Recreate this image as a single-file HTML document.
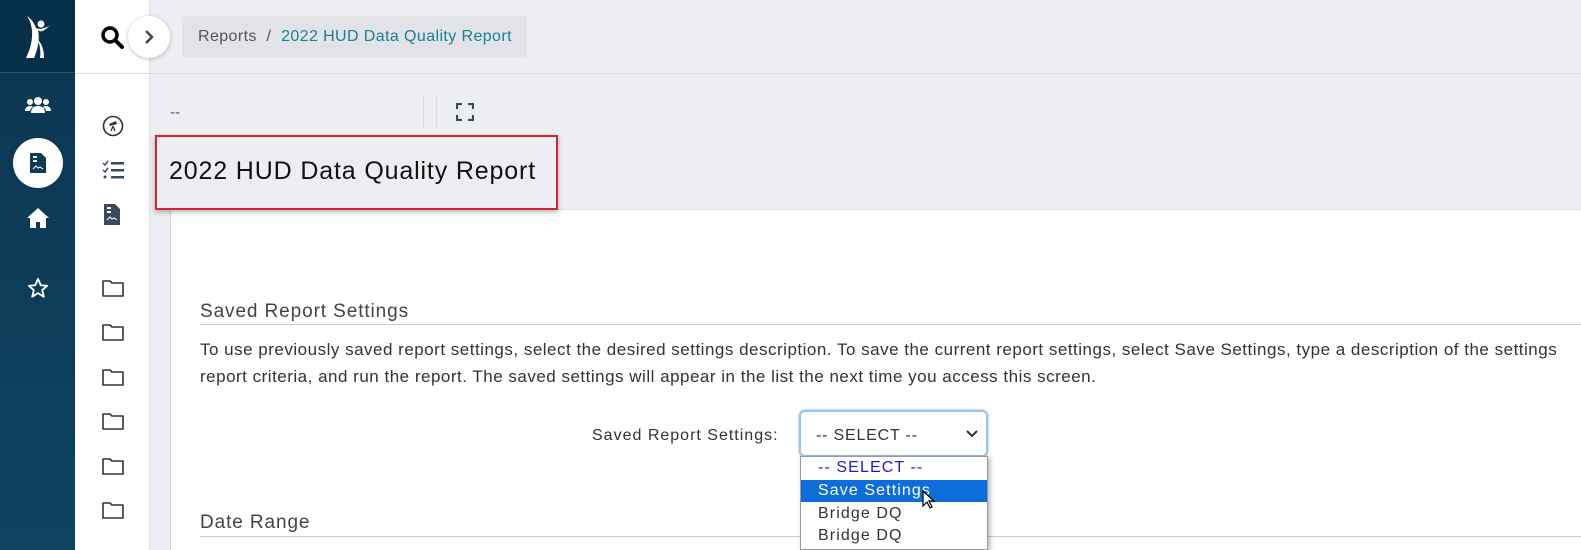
<!DOCTYPE html>
<html><head><style>
*{margin:0;padding:0;box-sizing:border-box}
body{width:1581px;height:550px;overflow:hidden;font-family:"Liberation Sans",sans-serif;background:#eceef1;position:relative}
.a{position:absolute}
</style></head><body>
<div class="a" style="left:0;top:0;width:75px;height:550px;background:linear-gradient(#0b3550,#0d4461)"></div>
<div class="a" style="left:0;top:0;width:75px;height:73px;background:#06304a;border-bottom:1px solid #2a5470"></div>
<svg class="a" style="left:24px;top:14px" width="30" height="46" viewBox="0 0 30 46"><path d="M3 2 C10 12 10 28 2 44 L10 44 C14 34 16 26 14 16 C18 20 22 14 26 12 C20 14 16 16 12 14 C10 8 6 4 3 2Z" fill="#fff"/><circle cx="17" cy="10" r="3.5" fill="#fff"/><path d="M14 26 C16 32 17 38 16 44 L20 44 C20 36 18 30 14 26Z" fill="#fff"/></svg>
<svg class="a" style="left:25px;top:96px" width="26" height="18" viewBox="0 0 26 18" fill="#fff"><circle cx="13" cy="5" r="4"/><circle cx="5" cy="6" r="3"/><circle cx="21" cy="6" r="3"/><path d="M6 17c0-5 3-7 7-7s7 2 7 7z"/><path d="M0 15c0-3 2-5 5-5 1 0 2 0 3 1-2 1-3 3-3 4z"/><path d="M26 15c0-3-2-5-5-5-1 0-2 0-3 1 2 1 3 3 3 4z"/></svg>
<div class="a" style="left:13px;top:138px;width:50px;height:50px;border-radius:50%;background:#fff"></div>
<svg class="a" style="left:30px;top:153px" width="16" height="20" viewBox="0 0 16 20"><path d="M0 0h11l5 5v15H0z" fill="#0d3b55"/><rect x="3" y="3" width="4" height="2" fill="#fff"/><rect x="3" y="7" width="4" height="2" fill="#fff"/><path d="M3 16l3-3 2 2 2-1 3 2" stroke="#fff" fill="none"/></svg>
<svg class="a" style="left:27px;top:208px" width="22" height="20" viewBox="0 0 22 20" fill="#fff"><path d="M11 0L0 10h3v10h6v-6h4v6h6V10h3z"/></svg>
<svg class="a" style="left:27px;top:277px" width="22" height="22" viewBox="0 0 24 24"><path d="M12 2l3 7 7 .6-5.4 4.7 1.7 7.2L12 17.6 5.7 21.5l1.7-7.2L2 9.6 9 9z" fill="none" stroke="#fff" stroke-width="2" stroke-linejoin="round"/></svg>
<div class="a" style="left:75px;top:0;width:75px;height:550px;background:#fff;border-right:1px solid #dcdfe3"></div>
<div class="a" style="left:75px;top:73px;width:1506px;height:1px;background:#dcdfe3"></div>
<svg class="a" style="left:100px;top:25px" width="26" height="24" viewBox="0 0 26 24"><circle cx="10" cy="10" r="7" fill="none" stroke="#000" stroke-width="3.5"/><path d="M15 15l7 7" stroke="#000" stroke-width="4" stroke-linecap="round"/></svg>
<div class="a" style="left:128px;top:16px;width:42px;height:42px;border-radius:50%;background:#fff;box-shadow:0 1px 4px rgba(0,0,0,.25)"></div>
<svg class="a" style="left:143px;top:29px" width="12" height="16" viewBox="0 0 12 16"><path d="M3 2l6 6-6 6" fill="none" stroke="#444" stroke-width="2.5"/></svg>
<div class="a" style="left:182px;top:16px;width:345px;height:41px;background:#e1e3e7;border-radius:3px;font-size:16px;letter-spacing:0.4px;line-height:41px;padding-left:16px;color:#555;white-space:nowrap">Reports &nbsp;/&nbsp; <span style="color:#1a7f97">2022 HUD Data Quality Report</span></div>
<svg class="a" style="left:102px;top:115px" width="22" height="22" viewBox="0 0 22 22"><circle cx="11" cy="11" r="9.5" fill="none" stroke="#333" stroke-width="1.6"/><path d="M7 9l7-3 1 3-7 2z" fill="#333"/><path d="M11 11l-2 5M11 11l2 5" stroke="#333" stroke-width="1.3"/></svg>
<svg class="a" style="left:102px;top:160px" width="22" height="20" viewBox="0 0 22 20" fill="#3a4a5e"><path d="M1 3l2 2 3-4" stroke="#3a4a5e" fill="none" stroke-width="1.5"/><path d="M1 10l2 2 3-4" stroke="#3a4a5e" fill="none" stroke-width="1.5"/><circle cx="3" cy="17" r="1.5"/><rect x="9" y="2" width="13" height="2.5"/><rect x="9" y="9" width="13" height="2.5"/><rect x="9" y="16" width="13" height="2.5"/></svg>
<svg class="a" style="left:104px;top:204px" width="16" height="21" viewBox="0 0 16 21"><path d="M0 0h11l5 5v16H0z" fill="#3a4a5e"/><rect x="3" y="3" width="4" height="2" fill="#fff"/><rect x="3" y="7" width="4" height="2" fill="#fff"/><path d="M3 16l3-3 2 2 2-1 3 2" stroke="#fff" fill="none"/></svg>
<svg width="0" height="0" style="position:absolute"><defs><symbol id="f" viewBox="0 0 22 18"><path d="M1 2h7l2 2h11v13H1z" fill="none" stroke="#333" stroke-width="1.6" stroke-linejoin="round"/></symbol></defs></svg>
<svg class="a" style="left:102px;top:279px" width="22" height="18"><use href="#f"/></svg>
<svg class="a" style="left:102px;top:323px" width="22" height="18"><use href="#f"/></svg>
<svg class="a" style="left:102px;top:368px" width="22" height="18"><use href="#f"/></svg>
<svg class="a" style="left:102px;top:412px" width="22" height="18"><use href="#f"/></svg>
<svg class="a" style="left:102px;top:457px" width="22" height="18"><use href="#f"/></svg>
<svg class="a" style="left:102px;top:501px" width="22" height="18"><use href="#f"/></svg>
<div class="a" style="left:170px;top:104px;font-size:15px;color:#555">--</div>
<div class="a" style="left:423px;top:97px;width:1px;height:30px;background:#d8dadd"></div>
<div class="a" style="left:436px;top:97px;width:1px;height:30px;background:#d8dadd"></div>
<svg class="a" style="left:456px;top:103px" width="18" height="18" viewBox="0 0 18 18"><path d="M1 6V1h5M12 1h5v5M17 12v5h-5M6 17H1v-5" fill="none" stroke="#3a4a5e" stroke-width="2.2"/></svg>
<div class="a" style="left:170px;top:209px;width:1411px;height:341px;background:#fff;border-left:1px solid #d4d6d9;border-top:1px solid #e0e2e5"></div>
<div class="a" style="left:155px;top:135px;width:403px;height:75px;border:2.5px solid #cc2631;box-shadow:0 2px 5px rgba(0,0,0,.3);background:#eceef1"></div>
<div class="a" style="left:169px;top:157px;font-size:25px;letter-spacing:0.85px;color:#111;white-space:nowrap">2022 HUD Data Quality Report</div>
<div class="a" style="left:200px;top:301px;font-size:19px;letter-spacing:0.9px;color:#444">Saved Report Settings</div>
<div class="a" style="left:200px;top:324px;width:1381px;height:1px;background:#ccc"></div>
<div class="a" style="left:200px;top:336px;width:1500px;font-size:17px;letter-spacing:0.5px;line-height:27px;color:#333;white-space:nowrap">To use previously saved report settings, select the desired settings description. To save the current report settings, select Save Settings, type a description of the settings<br>report criteria, and run the report. The saved settings will appear in the list the next time you access this screen.</div>
<div class="a" style="left:592px;top:427px;font-size:16px;letter-spacing:1px;color:#333;white-space:nowrap">Saved Report Settings:</div>
<div class="a" style="left:799px;top:410px;width:189px;height:47px;border:2px solid #9cc3ef;border-radius:6px;background:#fff;box-shadow:0 0 2px #7aaee6"></div>
<div class="a" style="left:816px;top:427px;font-size:16px;letter-spacing:0.8px;color:#333">-- SELECT --</div>
<svg class="a" style="left:966px;top:430px" width="12" height="8" viewBox="0 0 12 8"><path d="M1 1l5 5 5-5" fill="none" stroke="#333" stroke-width="2"/></svg>
<div class="a" style="left:200px;top:512px;font-size:19px;letter-spacing:0.9px;color:#444">Date Range</div>
<div class="a" style="left:200px;top:536px;width:1381px;height:1px;background:#ccc"></div>
<div class="a" style="left:800px;top:456px;width:188px;height:94px;background:#fff;border:1px solid #999;box-shadow:2px 2px 5px rgba(0,0,0,.3);font-size:16px;letter-spacing:1.1px;line-height:23px;white-space:nowrap">
<div style="padding-left:17px;color:#1a1acc;height:23px;line-height:22px">-- SELECT --</div>
<div style="padding-left:17px;color:#fff;background:#0d6ddb;height:22px;line-height:21px">Save Settings</div>
<div style="padding-left:17px;color:#333;height:22px">Bridge DQ</div>
<div style="padding-left:17px;color:#333">Bridge DQ</div>
</div>
<svg class="a" style="left:922px;top:490px" width="14" height="20" viewBox="0 0 14 20"><path d="M1 1v15l4-4 3 6 2-1-3-6h5z" fill="#fff" stroke="#000" stroke-width="1.2"/></svg>
</body></html>
